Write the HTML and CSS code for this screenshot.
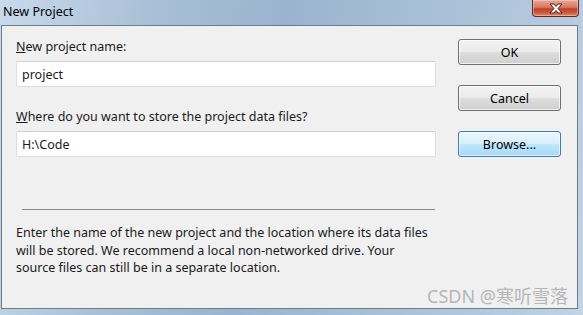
FILE: index.html
```html
<!DOCTYPE html>
<html lang="en">
<head>
  <meta charset="UTF-8" />
  <title>New Project</title>
  <link rel="stylesheet" href="styles.css">
</head>
<body>
  <div class="window">
    <div class="titlebar">
      <span class="title">New Project</span>
      <div class="close-btn">
        <svg width="20" height="11" viewBox="0 0 20 11">
          <path d="M4 1 L8 1 L10 3.5 L12 1 L16 1 L12 5.5 L16 10 L12 10 L10 7.5 L8 10 L4 10 L8 5.5 Z" fill="#fff" stroke="#4a2018" stroke-width="1" stroke-linejoin="round"/>
        </svg>
      </div>
    </div>

    <div class="client">
      <div class="form">
        <label class="field-label" for="name"><u>N</u>ew project name:</label>
        <div class="text-box" id="name">project</div>

        <label class="field-label second" for="location"><u>W</u>here do you want to store the project data files?</label>
        <div class="text-box" id="location">H:\Code</div>

        <div class="separator"></div>

        <p class="hint">Enter the name of the new project and the location where its data files will be stored. We recommend a local non-networked drive. Your source files can still be in a separate location.</p>
      </div>

      <div class="buttons">
        <button class="btn">OK</button>
        <button class="btn">Cancel</button>
        <button class="btn focused">Browse...</button>
      </div>

      <div class="watermark">CSDN @寒听雪落</div>
    </div>
  </div>
</body>
</html>
```

FILE: styles.css
```css
* { box-sizing: border-box; }

body {
  margin: 0;
  width: 583px;
  height: 315px;
  overflow: hidden;
  font-family: 'Noto Sans', 'Noto Sans CJK SC', sans-serif;
  font-size: 12.5px;
  color: #1a1a1a;
  background: linear-gradient(100deg, #c9daeb 0%, #a7bed6 25%, #9ab4cf 45%, #a9c0d8 70%, #b7cbe0 90%, #c2d4e6 100%);
}

.window {
  padding: 0 5px 6px 1px;
  height: 315px;
  display: flex;
  flex-direction: column;
}

/* Aero title bar */
.titlebar {
  height: 25px;
  display: flex;
  justify-content: space-between;
  align-items: flex-start;
}

.title {
  padding: 4px 0 0 2px;
  line-height: 16px;
  color: #000;
}

.close-btn {
  width: 47px;
  height: 17px;
  margin-right: -1px;
  border: 1px solid #5e2a22;
  border-top: none;
  border-radius: 0 0 4px 4px;
  background: linear-gradient(#e9a797 0%, #d77a64 45%, #c0402a 55%, #cf5a3f 80%, #e08a6c 100%);
  box-shadow: inset 0 0 0 1px rgba(255, 220, 210, 0.45);
  display: flex;
  align-items: center;
  justify-content: center;
}

/* Dialog client area */
.client {
  flex: 1;
  position: relative;
  background: #f0f0f0;
  border: 1px solid #707b88;
  display: flex;
  padding: 13px 16px 0 14px;
  gap: 22px;
}

.form {
  width: 420px;
}

.field-label {
  display: block;
  line-height: 16px;
}

.field-label.second {
  margin-top: 22px;
}

.text-box {
  margin-top: 6px;
  height: 26px;
  padding: 0 5px;
  line-height: 25px;
  background: #fff;
  border: 1px solid #dedede;
  border-top-color: #cfcfcf;
  border-radius: 2px;
}

.separator {
  margin: 52px 1px 0 6px;
  height: 1px;
  background: #8a8a8a;
}

.hint {
  margin: 14px 0 0;
  line-height: 17.5px;
}

.buttons {
  display: flex;
  flex-direction: column;
  gap: 20px;
}

.btn {
  width: 103px;
  height: 26px;
  padding: 0;
  border: 1px solid #707070;
  border-radius: 3px;
  background: linear-gradient(#f2f2f2 0%, #ebebeb 48%, #dddddd 52%, #cfcfcf 100%);
  box-shadow: inset 0 0 0 1px rgba(255, 255, 255, 0.7);
  font-family: inherit;
  font-size: 12.5px;
  color: #000;
}

.btn.focused {
  border-color: #3c7fb1;
  background: linear-gradient(#eaf6fd 0%, #d9f0fc 48%, #bee6fd 52%, #a7d9f5 100%);
  box-shadow: inset 0 0 0 1px rgba(255, 255, 255, 0.6);
}

/* watermark laid over the bottom-right corner */
.watermark {
  position: absolute;
  right: 9px;
  bottom: 1px;
  font-size: 18px;
  line-height: 22px;
  color: rgba(130, 130, 130, 0.55);
}
```
